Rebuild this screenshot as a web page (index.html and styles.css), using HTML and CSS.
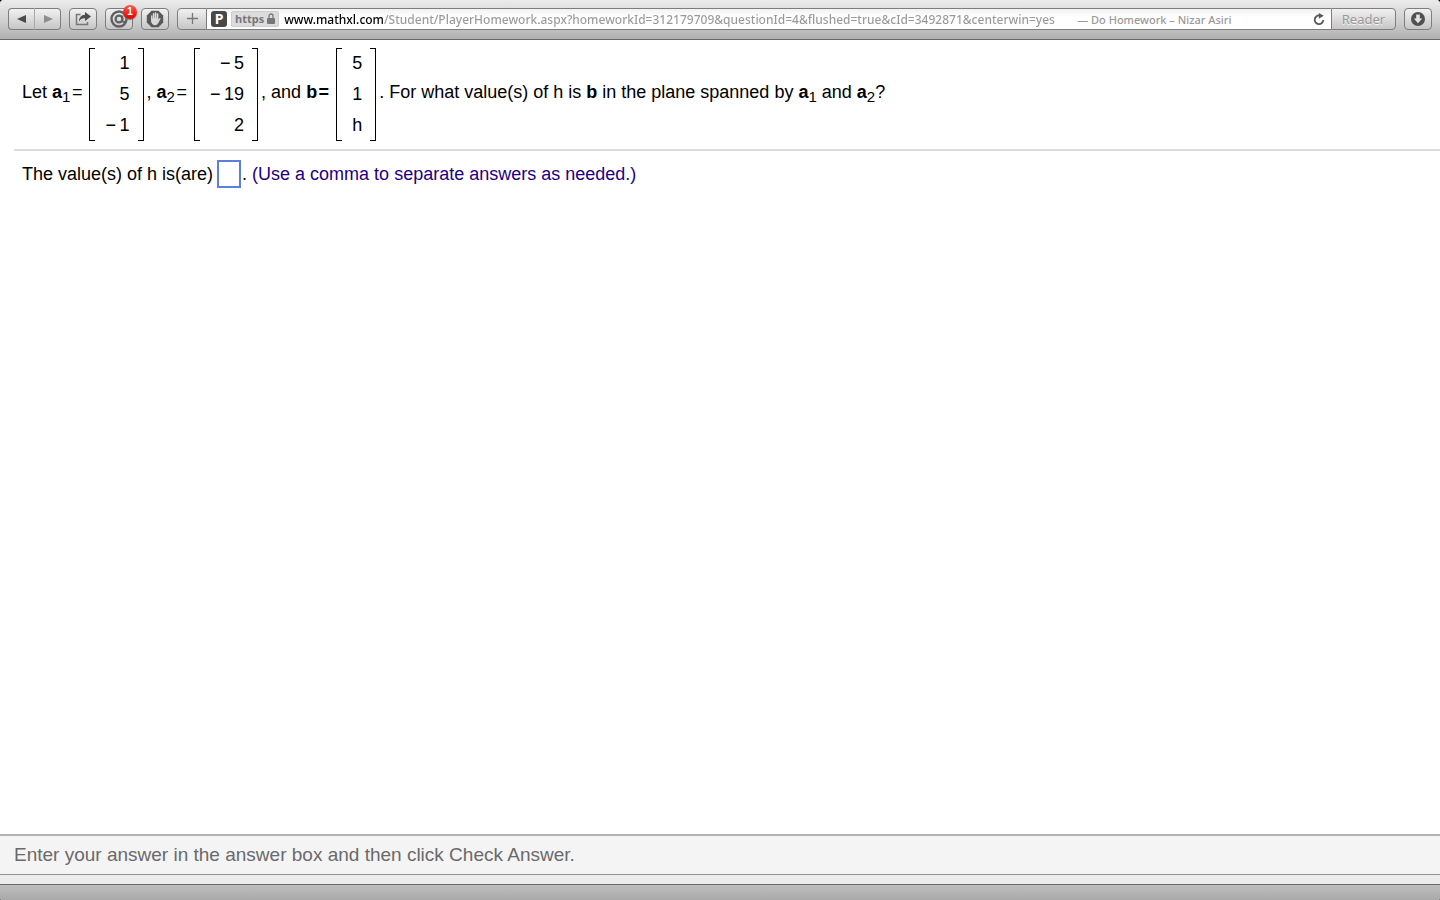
FILE: index.html
```
<!DOCTYPE html>
<html lang="en">
  <head>
    <meta charset="utf-8">
    <meta name="viewport" content="width=device-width, initial-scale=1.0">
    <title>Do Homework - Nizar Asiri</title>
    <link rel="stylesheet" href="styles.css">
  </head>
  <body>
    <div class="window">
      <header class="toolbar">
        <div class="history">
          <button class="tool back" type="button" aria-label="Back">
            <svg width="10" height="10" viewBox="0 0 10 10"><path d="M9 1v8L0 5z" fill="#4a4a4a"/></svg>
          </button>
          <button class="tool forward" type="button" aria-label="Forward">
            <svg width="10" height="10" viewBox="0 0 10 10"><path d="M1 1v8l9-4z" fill="#8e8e8e"/></svg>
          </button>
        </div>
        <button class="tool" type="button" aria-label="Share">
          <svg width="18" height="16" viewBox="0 0 18 16">
            <path d="M6.500 3.500H2.500v10h11V11" fill="none" stroke="#777" stroke-width="1.500"/>
            <path d="M11 1l6 4.500L11 10V7.300C8.500 7 6.500 8 5 10.500 5 6.500 7.300 4 11 3.800z" fill="#4d4d4d"/>
          </svg>
        </button>
        <button class="tool" type="button" aria-label="Trackers found">
          <svg width="18" height="18" viewBox="0 0 18 18">
            <circle cx="9" cy="9" r="7.500" fill="none" stroke="#606060" stroke-width="2.400"/>
            <circle cx="9" cy="9" r="3.400" fill="none" stroke="#606060" stroke-width="2.200"/>
            <path d="M12.300 5.500v5q.6 2.500 3.200 1" fill="none" stroke="#606060" stroke-width="1.800"/>
          </svg>
          <span class="badge">1</span>
        </button>
        <button class="tool" type="button" aria-label="Block ads">
          <svg width="18" height="18" viewBox="0 0 18 18">
            <path d="M5.500.800h7l4.700 4.700v7l-4.700 4.700h-7L.800 12.500v-7z" fill="#595959"/>
            <path d="M5 6.200q0-1 .7-1t.7 1V8.500h.4V4q0-1 .8-1t.8 1v4h.4V3.300q0-1 .8-1t.8 1V8h.4V4.300q0-1 .8-1t.8 1v5.500l1-1.500q.8-.7 1.300.2L12.300 13q-.8 2-2.800 2.300-2.700.2-3.800-2Q5 12 5 10z" fill="#d8d8d8"/>
          </svg>
        </button>
        <form class="address">
          <button class="tool add" type="button" aria-label="Add bookmark">
            <svg width="11" height="11" viewBox="0 0 11 11"><path d="M5.500 0v11M0 5.500h11" stroke="#777" stroke-width="1.300"/></svg>
          </button>
          <div class="location">
            <span class="site-icon">P</span>
            <span class="secure">https
              <svg width="8" height="11" viewBox="0 0 8 11"><path d="M2 5V3a2 2 0 0 1 4 0v2" fill="none" stroke="#777" stroke-width="1.300"/><rect y="5" width="8" height="6" rx="1" fill="#777"/></svg>
            </span>
            <input class="url" type="text" aria-label="Address" value="www.mathxl.com/Student/PlayerHomework.aspx?homeworkId=312179709&amp;questionId=4&amp;flushed=true&amp;cId=3492871&amp;centerwin=yes">
            <span class="page-title">— Do Homework – Nizar Asiri</span>
            <button class="reload" type="button" aria-label="Reload">
              <svg width="12" height="12" viewBox="0 0 12 12"><path d="M10.300 7A4.300 4.300 0 1 1 6.500 2.500" fill="none" stroke="#585858" stroke-width="1.800"/><path d="M5.800 0l5 2.700-5 3z" fill="#585858"/></svg>
            </button>
          </div>
          <button class="tool reader" type="button">Reader</button>
        </form>
        <button class="tool" type="button" aria-label="Downloads">
          <svg width="14" height="14" viewBox="0 0 14 14"><circle cx="7" cy="7" r="7" fill="#505050"/><path d="M5.200 2.500h3.600v4h2.400L7 11.300 2.800 6.500h2.400z" fill="#e4e4e4"/></svg>
        </button>
      </header>

      <main class="exercise">
        <div class="question">
          <span class="text">Let <b>a</b><sub>1</sub>&#8202;=</span>
          <table class="matrix">
            <tr><td>1</td></tr>
            <tr><td>5</td></tr>
            <tr><td>−&#8201;1</td></tr>
          </table>
          <span class="text">, <b>a</b><sub>2</sub>&#8202;=</span>
          <table class="matrix">
            <tr><td>−&#8201;5</td></tr>
            <tr><td>−&#8201;19</td></tr>
            <tr><td>2</td></tr>
          </table>
          <span class="text">, and <b>b&#8202;=</b></span>
          <table class="matrix">
            <tr><td>5</td></tr>
            <tr><td>1</td></tr>
            <tr><td>h</td></tr>
          </table>
          <span class="text">. For what value(s) of h is <b>b</b> in the plane spanned by <b>a</b><sub>1</sub> and <b>a</b><sub>2</sub>?</span>
        </div>
        <div class="answer">
          <label for="answer">The value(s) of h is(are)</label>
          <input class="answer-box" type="text" id="answer">
          <span>. <span class="hint">(Use a comma to separate answers as needed.)</span></span>
        </div>
      </main>

      <div class="instruction">Enter your answer in the answer box and then click Check Answer.</div>
      <div class="gutter"></div>
      <footer class="window-edge"></footer>
    </div>
  </body>
</html>
```

FILE: styles.css
```
* {
  box-sizing: border-box;
}

body {
  margin: 0;
  background: #000;
  font-family: "Liberation Sans", Arial, sans-serif;
}

.window {
  display: flex;
  flex-direction: column;
  min-height: 100vh;
  background: #fff;
  border-radius: 4px 4px 2px 2px;
  overflow: hidden;
}

/* browser toolbar */
.toolbar {
  display: flex;
  align-items: center;
  gap: 8px;
  height: 40px;
  padding: 0 8px 2px;
  background: linear-gradient(#ebebeb, #cecece 55%, #b0b0b0);
  border-bottom: 1px solid #686868;
  font-family: "Noto Sans", "Open Sans", sans-serif;
}

.tool {
  display: flex;
  align-items: center;
  justify-content: center;
  position: relative;
  flex: none;
  width: 28px;
  height: 22px;
  padding: 0;
  background: linear-gradient(#f1f1f1, #c6c6c6);
  border: 1px solid #7d7d7d;
  border-radius: 4px;
}

.history {
  display: flex;
}

.back {
  width: 27px;
  border-right-color: #aaa;
  border-radius: 4px 0 0 4px;
}

.forward {
  width: 26px;
  border-left: 0;
  border-radius: 0 4px 4px 0;
}

.badge {
  position: absolute;
  top: -4px;
  right: -5px;
  width: 14px;
  height: 14px;
  border-radius: 50%;
  background: linear-gradient(#ff5a50, #e00000);
  color: #fff;
  font-size: 10px;
  font-weight: bold;
  line-height: 14px;
  text-align: center;
  box-shadow: 0 1px 1px #777;
}

.address {
  display: flex;
  flex: 1;
  min-width: 0;
}

.add {
  width: 30px;
  border-radius: 4px 0 0 4px;
}

.location {
  display: flex;
  align-items: center;
  flex: 1;
  min-width: 0;
  padding: 0 6px 0 4px;
  background: linear-gradient(#f2f2f2, #fff 40%);
  border: solid #7d7d7d;
  border-width: 1px 0;
}

.site-icon {
  width: 16px;
  height: 16px;
  border-radius: 3px;
  background: #484848;
  color: #fff;
  font-size: 14px;
  font-weight: bold;
  line-height: 16px;
  text-align: center;
}

.secure {
  display: flex;
  align-items: center;
  gap: 3px;
  height: 16px;
  margin: 0 5px 0 4px;
  padding: 0 3px;
  border-radius: 2px;
  background: #dcdcdc;
  border: 1px solid #ccc;
  color: #777;
  font-size: 11px;
  font-weight: bold;
}

/* the domain is black, the rest of the address grey */
.url {
  width: 793px;
  min-width: 0;
  height: 20px;
  padding: 2px 0 0;
  border: 0;
  background: linear-gradient(90deg, #000 100px, #999 100px);
  -webkit-background-clip: text;
  background-clip: text;
  color: transparent;
  font: 500 12px "Noto Sans", "Open Sans", sans-serif;
}

.page-title {
  flex: 1;
  padding-top: 2px;
  color: #999;
  font-size: 11px;
  font-weight: 500;
  white-space: nowrap;
}

.reload {
  display: flex;
  padding: 0;
  border: 0;
  background: none;
}

.reader {
  width: 65px;
  border-radius: 0 4px 4px 0;
  color: #999;
  font: 13px "Noto Sans", "Open Sans", sans-serif;
  text-shadow: 0 1px 0 #f5f5f5;
}

/* exercise */
.exercise {
  flex: 1;
  padding: 8px 0 0 14px;
  font-size: 18px;
}

.question {
  display: flex;
  align-items: center;
  padding: 0 8px 8px;
  border-bottom: 2px solid #dcdcdc;
}

.text {
  padding: 0 7px 6px 3px;
  line-height: 24px;
}

.text:first-child {
  padding-left: 0;
}

sub {
  font-size: 15px;
  line-height: 0;
  vertical-align: -4px;
}

.matrix {
  position: relative;
  border-spacing: 0;
  border: solid #000;
  border-width: 0 1px;
  text-align: right;
}

/* the ends of the brackets */
.matrix::before,
.matrix::after {
  content: "";
  position: absolute;
  left: 0;
  right: 0;
  height: 1px;
  background: linear-gradient(#000, #000) left / 5px 1px no-repeat, linear-gradient(#000, #000) right / 5px 1px no-repeat;
}

.matrix::before {
  top: 0;
}

.matrix::after {
  bottom: 0;
}

.matrix td {
  height: 31px;
  padding: 0 13px 0 15px;
}

.answer {
  display: flex;
  align-items: center;
  padding: 9px 8px;
}

.answer-box {
  width: 24px;
  height: 28px;
  margin: 0 1px 0 4px;
  padding: 0 2px;
  border: 2px solid #5c7fdb;
  font: inherit;
}

.hint {
  color: #1f0080;
}

/* bottom bars */
.instruction {
  height: 41px;
  padding-left: 14px;
  background: #f4f4f4;
  border-top: 2px solid #b2b2b2;
  border-bottom: 1px solid #949494;
  color: #6a6a6a;
  font-size: 19px;
  line-height: 38px;
}

.gutter {
  height: 9px;
  background: #ececec;
}

.window-edge {
  height: 16px;
  background: linear-gradient(#bebebe, #a9a9a9);
  border-top: 1px solid #6b6b6b;
}
```
